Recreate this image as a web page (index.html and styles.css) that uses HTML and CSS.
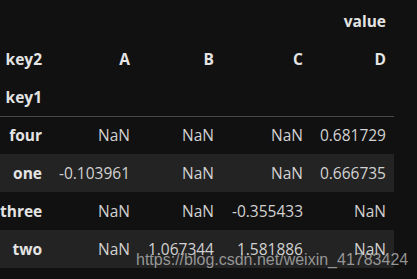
FILE: index.html
```
<!DOCTYPE html>
<html>
<head>
<meta charset="utf-8">
<link rel="stylesheet" href="styles.css">
</head>
<body>
<table class="df">
  <colgroup>
    <col class="c-idx"><col class="c-a"><col class="c-b"><col class="c-c"><col class="c-d">
  </colgroup>
  <thead>
    <tr><th></th><th></th><th></th><th></th><th>value</th></tr>
    <tr><th>key2</th><th>A</th><th>B</th><th>C</th><th>D</th></tr>
    <tr class="last-head"><th>key1</th><th></th><th></th><th></th><th></th></tr>
  </thead>
  <tbody>
    <tr><th>four</th><td>NaN</td><td>NaN</td><td>NaN</td><td>0.681729</td></tr>
    <tr class="odd"><th>one</th><td>-0.103961</td><td>NaN</td><td>NaN</td><td>0.666735</td></tr>
    <tr><th>three</th><td>NaN</td><td>NaN</td><td>-0.355433</td><td>NaN</td></tr>
    <tr class="odd"><th>two</th><td>NaN</td><td>1.067344</td><td>1.581886</td><td>NaN</td></tr>
  </tbody>
</table>
<div class="watermark">https://blog.csdn.net/weixin_41783424</div>
</body>
</html>
```
FILE: styles.css
```
html, body {
  margin: 0;
  background: #111111;
}
body {
  padding-top: 2px;
  height: 277px;
  overflow: hidden;
  position: relative;
  font-family: "Open Sans", "Noto Sans", sans-serif;
  font-size: 15.5px;
}
.df {
  border-collapse: collapse;
  table-layout: fixed;
  width: 394px;
}
.c-idx { width: 50px; }
.c-a { width: 88px; }
.c-b { width: 84px; }
.c-c { width: 89px; }
.c-d { width: 83px; }
.df th, .df td {
  height: 38px;
  padding: 0 8px 0 0;
  text-align: right;
  white-space: nowrap;
  box-sizing: border-box;
}
.df th {
  color: #e4e4e4;
  font-weight: 700;
}
.df td {
  color: #d2d2d2;
  font-weight: 400;
}
.last-head th {
  border-bottom: 1px solid #4a4a4a;
}
.odd {
  background: #232323;
}
.watermark {
  position: absolute;
  left: 136px;
  top: 252px;
  font-family: "Liberation Sans", Arial, sans-serif;
  font-size: 16px;
  line-height: 16px;
  color: rgba(190, 190, 190, 0.75);
  white-space: nowrap;
}
```
